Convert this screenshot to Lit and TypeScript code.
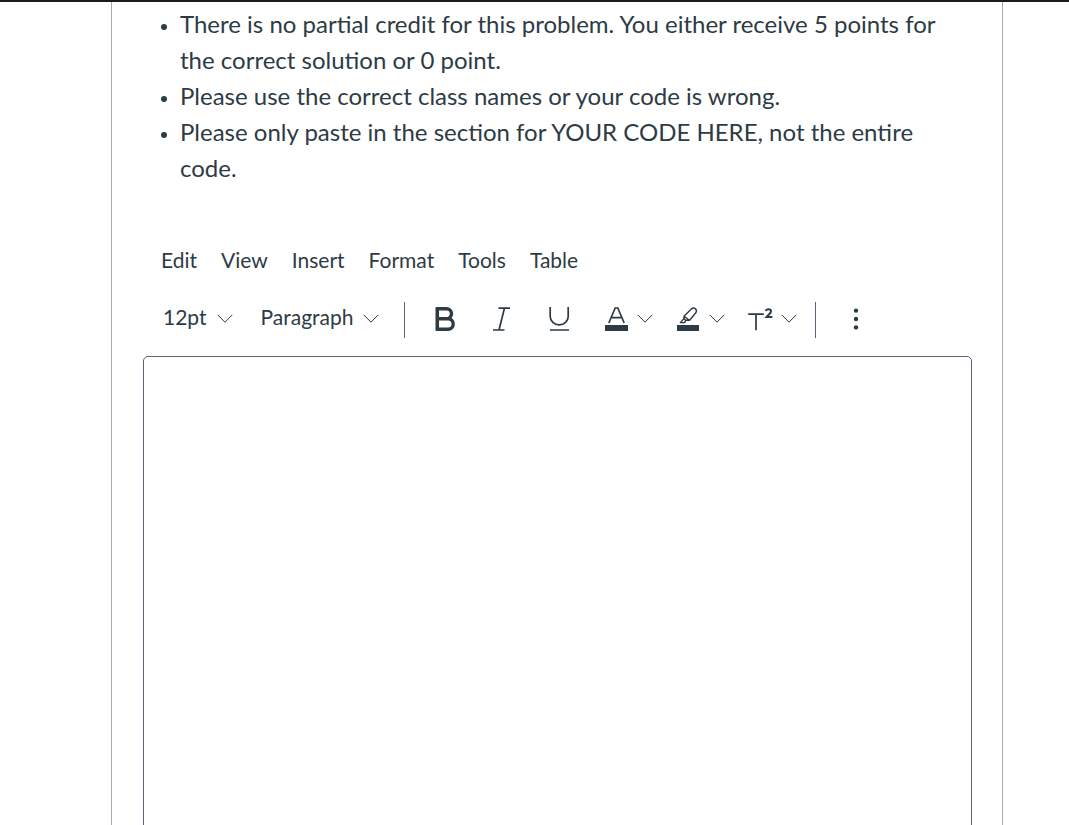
import { LitElement, html, css, svg } from "lit";
import { customElement } from "lit/decorators.js";

const chevron = html`<svg class="chevron" viewBox="0 0 16 12" width="16" height="12" aria-hidden="true">
  <path d="M.7 1.8 L8 9.2 L15.3 1.8" fill="none" stroke="currentColor" stroke-width="1" />
</svg>`;

const icon = (content: unknown) =>
  html`<svg class="icon" viewBox="0 0 24 24" width="24" height="24" aria-hidden="true">${content}</svg>`;

const icons = {
  bold: icon(svg`<path d="M4.3 1.8 H13.5 A4.9 4.9 0 0 1 13.5 11.8 H4.3 M13.5 11.8 H15 A5.1 5.1 0 0 1 15 22.2 H4.3"
      fill="none" stroke="currentColor" stroke-width="3.4"/><path d="M2.5 .1 H6 V23.9 H2.5Z" fill="currentColor"/>`),
  italic: icon(svg`<path d="M8.5 1.1 H20 M3 23 H14.5 M14.5 1 L9 23" fill="none" stroke="currentColor" stroke-width="1.7"/>`),
  underline: icon(svg`<path d="M3.2 0 V9.5 A9 8.4 0 0 0 21.2 9.5 V0 M3 23 H22" fill="none" stroke="currentColor" stroke-width="1.7"/>`),
  textColor: icon(svg`<path d="M3.8 16 L10.2 1 H12.8 L19.2 16 M6.4 10.6 H16.6" fill="none" stroke="currentColor" stroke-width="1.7"/>
    <path d="M0 18 H23 V24 H0Z" fill="currentColor"/>`),
  highlight: icon(svg`<path d="M7 9.2 L14.6 1.7 Q16.8 .2 18.6 2 Q20.2 3.8 18.8 5.8 L12.6 13.2 H8.6 L6.8 11.6Z M6.8 11.6 L3.4 15.6 H7.6 L8.9 13.2 M7 9.2 L12.4 13.2"
      fill="none" stroke="currentColor" stroke-width="1.4" stroke-linejoin="round"/>
    <path d="M0 18 H22 V24 H0Z" fill="currentColor"/>`),
  superscript: icon(svg`<path d="M-.8 7.1 H14.8 M7 7 V23.2" fill="none" stroke="currentColor" stroke-width="1.7"/>
    <path d="M16.8 4 Q17.2 2.2 19.4 2.2 Q22 2.2 22 4.3 Q22 5.5 20.6 6.8 L17.6 10 H23.4" fill="none" stroke="currentColor" stroke-width="2"/>`),
  more: icon(svg`<g fill="currentColor"><circle cx="12" cy="3.6" r="2.2"/><circle cx="12" cy="12" r="2.2"/><circle cx="12" cy="20.4" r="2.2"/></g>`),
};

@customElement("app-root")
export class AppRoot extends LitElement {
  static styles = css`
    :host {
      display: block;
      box-sizing: border-box;
      height: 100vh;
      overflow: hidden;
      border-top: 2px solid #1c1a1d;
      background: #fff;
      color: #2d3b45;
      font-family: Lato, "Open Sans", sans-serif;
      font-size: 24px;
      line-height: 36px;
    }
    .question {
      box-sizing: border-box;
      display: flex;
      flex-direction: column;
      height: 100%;
      margin: 0 66px 0 111px;
      padding: 4px 30px 0 31px;
      border: solid #aaa;
      border-width: 0 1px;
    }
    .rules {
      margin: 0;
      padding-left: 37px;
      list-style: none;
    }
    .rules li::before {
      content: "";
      float: left;
      width: 6px;
      height: 6px;
      margin: 18px 0 0 -19px;
      border-radius: 50%;
      background: currentColor;
    }
    button, select {
      appearance: none;
      margin: 0;
      padding: 0;
      border: 0;
      background: none;
      color: inherit;
      font: inherit;
      cursor: pointer;
    }
    .menubar {
      display: flex;
      gap: 24px;
      margin-top: 56px;
      padding: 0 18px;
      font-size: 21px;
    }
    .toolbar {
      display: flex;
      align-items: center;
      height: 36px;
      margin: 24px 0 18px;
      font-size: 21px;
    }
    .pickers {
      display: flex;
      gap: 28px;
      padding: 0 25px 0 20px;
    }
    .picker {
      display: grid;
      align-items: center;
    }
    .picker select {
      grid-area: 1 / 1;
      box-sizing: border-box;
      height: 36px;
      padding: 0 26px 6px 0;
      line-height: 30px;
      field-sizing: content;
    }
    .picker .chevron {
      grid-area: 1 / 1;
      margin: 0 0 2px auto;
      pointer-events: none;
    }
    .group {
      display: flex;
      padding-left: 11px;
    }
    .splits {
      display: flex;
      padding: 0 6px;
    }
    .tool {
      width: 57px;
      height: 36px;
      padding-bottom: 2px;
    }
    .split {
      display: flex;
      align-items: center;
      gap: 8px;
      padding: 0 12px;
    }
    .split button {
      height: 36px;
      padding-bottom: 2px;
    }
    .icon, .chevron {
      display: block;
      margin: 0 auto;
      overflow: visible;
    }
    .divider {
      width: 1px;
      height: 36px;
      background: #566573;
    }
    .editor {
      box-sizing: border-box;
      display: block;
      flex: 1;
      width: 100%;
      margin: 0 0 -8px;
      padding: 16px;
      border: 1px solid #566573;
      border-radius: 5px;
      outline: 0;
      resize: none;
      background: #fff;
      color: inherit;
      font: inherit;
    }
  `;

  private menus = ["Edit", "View", "Insert", "Format", "Tools", "Table"];

  private rules = [
    "There is no partial credit for this problem. You either receive 5 points for the correct solution or 0 point.",
    "Please use the correct class names or your code is wrong.",
    "Please only paste in the section for YOUR CODE HERE, not the entire code.",
  ];

  private picker(label: string, value: string) {
    return html`<div class="picker">
      <select aria-label=${label}><option>${value}</option></select>${chevron}
    </div>`;
  }

  private tool(label: string, glyph: unknown) {
    return html`<button class="tool" type="button" aria-label=${label}>${glyph}</button>`;
  }

  private split(label: string, glyph: unknown) {
    return html`<div class="split">
      <button type="button" aria-label=${label}>${glyph}</button>
      <button type="button" aria-label="${label} options">${chevron}</button>
    </div>`;
  }

  render() {
    return html`<main class="question">
      <ul class="rules">${this.rules.map((rule) => html`<li>${rule}</li>`)}</ul>
      <div class="menubar" role="menubar">
        ${this.menus.map((name) => html`<button type="button" role="menuitem">${name}</button>`)}
      </div>
      <div class="toolbar" role="toolbar" aria-label="Formatting">
        <div class="pickers">${this.picker("Font size", "12pt")}${this.picker("Block style", "Paragraph")}</div>
        <span class="divider"></span>
        <div class="group">
          ${this.tool("Bold", icons.bold)}${this.tool("Italic", icons.italic)}${this.tool("Underline", icons.underline)}
        </div>
        <div class="splits">
          ${this.split("Text color", icons.textColor)}${this.split("Highlight color", icons.highlight)}${this.split("Superscript", icons.superscript)}
        </div>
        <span class="divider"></span>
        <div class="group">${this.tool("More", icons.more)}</div>
      </div>
      <textarea class="editor" aria-label="Answer"></textarea>
    </main>`;
  }
}
